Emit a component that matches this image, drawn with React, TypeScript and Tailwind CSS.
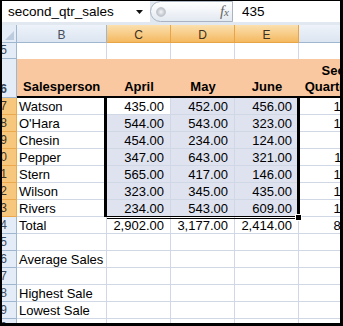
import React from "react";

type Row = {
  n: string;
  b?: string;
  c?: string;
  d?: string;
  e?: string;
  f?: string;
  sel?: boolean;
};

const rows: Row[] = [
  { n: "7", b: "Watson", c: "435.00", d: "452.00", e: "456.00", f: "1,343.00", sel: true },
  { n: "8", b: "O'Hara", c: "544.00", d: "543.00", e: "323.00", f: "1,410.00", sel: true },
  { n: "9", b: "Chesin", c: "454.00", d: "234.00", e: "124.00", f: "812.00", sel: true },
  { n: "10", b: "Pepper", c: "347.00", d: "643.00", e: "321.00", f: "1,311.00", sel: true },
  { n: "11", b: "Stern", c: "565.00", d: "417.00", e: "146.00", f: "1,128.00", sel: true },
  { n: "12", b: "Wilson", c: "323.00", d: "345.00", e: "435.00", f: "1,103.00", sel: true },
  { n: "13", b: "Rivers", c: "234.00", d: "543.00", e: "609.00", f: "1,386.00", sel: true },
  { n: "14", b: "Total", c: "2,902.00", d: "3,177.00", e: "2,414.00", f: "8,493.00" },
  { n: "15" },
  { n: "16", b: "Average Sales" },
  { n: "17" },
  { n: "18", b: "Highest Sale" },
  { n: "19", b: "Lowest Sale" },
  { n: "20" },
];

const RowHead = ({ n, sel, h }: { n: string; sel?: boolean; h: string }) => (
  <div
    className={`${h} w-[15px] shrink-0 flex items-end justify-end pr-[9px] pb-[1px] border-r border-b text-[12px] leading-[14px] overflow-hidden ${
      sel ? "bg-[#f8c77e] border-[#eaa94c] text-[#3a3226]" : "bg-[#e4ecf7] border-[#9eb6ce] text-[#3c4b5f]"
    }`}
  >
    {n}
  </div>
);

const NumCell = ({ v, w, bg }: { v?: string; w: string; bg: string }) => (
  <div className={`${w} ${bg} h-full shrink-0 flex items-end justify-end pr-[6px] border-r border-b border-[#d0d7e5] whitespace-nowrap`}>
    {v}
  </div>
);

const DataRow = ({ r, first }: { r: Row; first?: boolean }) => {
  const lav = r.sel ? "bg-[#dfe3f0]" : "bg-white";
  return (
    <div className="flex h-[17px] shrink-0">
      <RowHead n={r.n} sel={r.sel} h="h-[17px]" />
      <div className="w-[90px] h-full shrink-0 flex items-end pl-[2px] border-r border-b border-[#d0d7e5] whitespace-nowrap">
        {r.b}
      </div>
      <NumCell v={r.c} w="w-[64px]" bg={first ? "bg-white" : lav} />
      <NumCell v={r.d} w="w-[64px]" bg={lav} />
      <NumCell v={r.e} w="w-[64px]" bg={lav} />
      <NumCell v={r.f} w="w-[92px]" bg="bg-white" />
    </div>
  );
};

const ColHead = ({ l, w, sel }: { l: string; w: string; sel?: boolean }) => (
  <div
    className={`${w} h-full shrink-0 flex items-end justify-center border-r border-b text-[12px] leading-[14px] ${
      sel
        ? "bg-linear-to-b from-[#fbe0ae] to-[#f4b95f] border-[#e9a445] text-[#3d3020]"
        : "bg-linear-to-b from-[#eef3fa] to-[#dce5f1] border-[#9eb6ce] text-[#45505e]"
    }`}
  >
    {l}
  </div>
);

export default function App() {
  return (
    <div className="w-[343px] h-[326px] bg-black pt-px pl-[2px] pr-[3px] pb-[3px] overflow-hidden">
      <div className="w-[338px] h-[322px] bg-white overflow-hidden flex flex-col font-['Liberation_Sans',Arial,sans-serif] text-[13px] leading-[15px] text-black">
        {/* formula bar */}
        <div className="h-[24px] shrink-0 flex items-start bg-[#e2e8f0]">
          <div className="w-[146px] h-[21px] bg-white flex items-center justify-between pl-[6px] pr-[5px] text-[13.5px]">
            <span>second_qtr_sales</span>
            <svg width="7" height="4" viewBox="0 0 7 4">
              <path d="M0 0 H7 L3.5 4 Z" fill="#111" />
            </svg>
          </div>
          <div className="w-[2px] h-[21px] bg-white" />
          <div className="w-[83px] h-[21px] rounded-l-full border border-[#a9b3c1] bg-linear-to-b from-white to-[#e3e9f1] flex items-center justify-between pl-[5px] pr-[3px]">
            <div className="w-[10px] h-[10px] rounded-full bg-radial from-[#f4f5f7] to-[#aab1bb] border border-[#c3c8cf]" />
            <span className="italic font-['Liberation_Serif',serif] text-[15px] text-[#666]">
              f<span className="text-[11px]">x</span>
            </span>
          </div>
          <div className="flex-1 h-[21px] bg-white flex items-center pl-[9px] text-[13.5px]">435</div>
        </div>

        {/* column headers */}
        <div className="flex h-[18px] shrink-0">
          <div className="w-[15px] h-full shrink-0 bg-[#e4ecf7] border-r border-b border-[#9eb6ce] flex items-end justify-end p-[2px]">
            <svg width="9" height="9" viewBox="0 0 9 9">
              <path d="M9 0 V9 H0 Z" fill="#bccbdd" />
            </svg>
          </div>
          <ColHead l="B" w="w-[90px]" />
          <ColHead l="C" w="w-[64px]" sel />
          <ColHead l="D" w="w-[64px]" sel />
          <ColHead l="E" w="w-[64px]" sel />
          <ColHead l="F" w="w-[92px]" />
        </div>

        {/* sheet body */}
        <div className="relative flex flex-col">
          <div className="flex h-[16px] shrink-0">
            <RowHead n="5" h="h-[16px]" />
            <div className="w-[90px] h-full shrink-0 border-r border-[#d0d7e5]" />
            <div className="w-[64px] h-full shrink-0 border-r border-[#d0d7e5]" />
            <div className="w-[64px] h-full shrink-0 border-r border-[#d0d7e5]" />
            <div className="w-[64px] h-full shrink-0 border-r border-[#d0d7e5]" />
            <div className="w-[92px] h-full shrink-0" />
          </div>

          <div className="flex h-[39px] shrink-0 font-bold leading-[16px]">
            <RowHead n="6" h="h-[39px]" />
            <div className="w-[90px] h-full shrink-0 bg-[#fac8a0] border-b-2 border-black flex items-end pl-[6px] pb-[1px]">
              Salesperson
            </div>
            <div className="w-[64px] h-full shrink-0 bg-[#fac8a0] border-b-2 border-black flex items-end justify-center pb-[1px]">
              April
            </div>
            <div className="w-[64px] h-full shrink-0 bg-[#fac8a0] border-b-2 border-black flex items-end justify-center pb-[1px]">
              May
            </div>
            <div className="w-[64px] h-full shrink-0 bg-[#fac8a0] border-b-2 border-black flex items-end justify-center pb-[1px]">
              June
            </div>
            <div className="w-[92px] h-full shrink-0 bg-[#fac8a0] border-b-2 border-black flex items-end justify-center text-center pb-[1px]">
              Second
              <br />
              Quarter Total
            </div>
          </div>

          {rows.map((r, i) => (
            <DataRow key={r.n} r={r} first={i === 0} />
          ))}

          {/* selection C7:E13 */}
          <div className="absolute left-[102px] top-[53px] w-[196px] h-[121px] border-l-[3px] border-r-[3px] border-t-2 border-b border-black" />
          <div className="absolute left-[105px] top-[175px] w-[190px] h-px bg-black" />
          <div className="absolute left-[293px] top-[171px] w-[7px] h-[7px] bg-black border border-white" />
        </div>
      </div>
    </div>
  );
}
